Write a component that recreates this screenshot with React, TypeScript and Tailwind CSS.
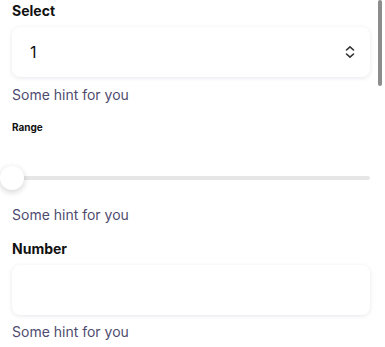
import { useState } from "react";

function Hint({ className = "mt-[9px]" }: { className?: string }) {
  return <p className={`${className} text-[14px] leading-[18px] text-[#4f4c70]`}>Some hint for you</p>;
}

export default function App() {
  const [value, setValue] = useState("1");
  const [range, setRange] = useState(0);

  return (
    <div
      className="relative h-[347px] overflow-hidden bg-white pl-3 pr-[15px] pt-[2px]"
      style={{ fontFamily: "Inter, 'Liberation Sans', sans-serif" }}
    >
      <div className="absolute right-[3px] top-0 h-[86px] w-[4px] rounded-sm bg-[#8c8c8c]" />

      <label className="block text-[14px] font-bold leading-[18px] text-[#111]">Select</label>
      <div className="relative mt-[7px] h-[50px] rounded-lg bg-white shadow-[0_1px_4px_rgba(60,60,100,0.12)]">
        <select
          value={value}
          onChange={(e) => setValue(e.target.value)}
          className="h-full w-full appearance-none bg-transparent pl-[18px] text-[16px] text-[#111] outline-none"
        >
          <option>1</option>
          <option>2</option>
          <option>3</option>
        </select>
        <svg
          className="pointer-events-none absolute right-[14px] top-[18px]"
          width="12"
          height="14"
          viewBox="0 0 12 14"
          fill="none"
          stroke="#333"
          strokeWidth="1.6"
          strokeLinecap="round"
          strokeLinejoin="round"
        >
          <path d="M2.5 5 6 1.8 9.5 5" />
          <path d="M2.5 9 6 12.2 9.5 9" />
        </svg>
      </div>
      <Hint />

      <label className="mt-[16px] block text-[10px] font-bold leading-[14px] text-[#111]">Range</label>
      <div className="relative -ml-3 mt-[32px] h-[24px]">
        <div className="absolute left-3 right-0 top-[10px] h-[4px] rounded-full bg-[#e6e6e6]" />
        <div
          className="absolute top-0 h-[24px] w-[24px] rounded-full bg-white shadow-[0_2px_6px_rgba(0,0,0,0.18)]"
          style={{ left: range }}
        />
        <input
          type="range"
          min={0}
          max={100}
          value={range}
          onChange={(e) => setRange(Number(e.target.value))}
          className="absolute inset-0 w-full opacity-0"
        />
      </div>
      <Hint className="mt-[16px]" />

      <label className="mt-[16px] block text-[14px] font-bold leading-[18px] text-[#111]">Number</label>
      <input
        type="number"
        className="mt-[7px] block h-[50px] w-full rounded-lg bg-white px-[18px] text-[16px] shadow-[0_1px_4px_rgba(60,60,100,0.12)] outline-none"
      />
      <Hint className="mt-[8px]" />
    </div>
  );
}
